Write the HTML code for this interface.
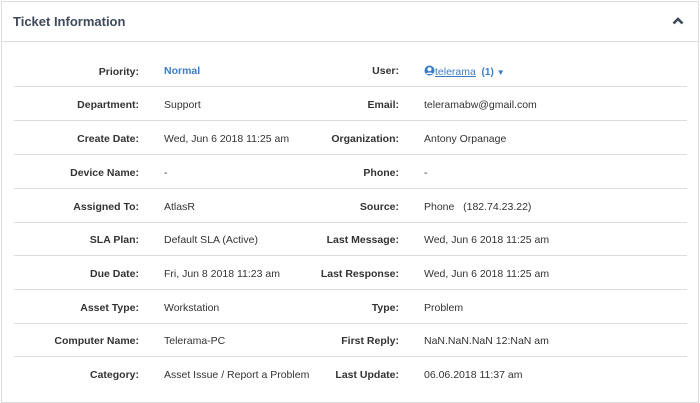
<!DOCTYPE html>
<html><head><style>
body{margin:0;width:700px;height:403px;background:#fff;font-family:"Liberation Sans",Arial,sans-serif;overflow:hidden}
.box{position:absolute;left:1px;top:1px;width:696px;height:400px;border:1px solid #ddd;background:#fff}
.hd{position:absolute;left:0;top:0;width:696px;height:39px;border-bottom:1px solid #ddd}
.hd b{position:absolute;left:11px;top:12px;font-size:13px;color:#3f4a5a}
.chev{position:absolute;right:14px;top:14px}
.row{position:absolute;left:12px;width:673px;height:33px;border-bottom:1px solid #ddd;font-size:10.5px;color:#333}
.row span{position:absolute;top:12px;white-space:nowrap}
.l{font-weight:bold;text-align:right}
.l1{right:548px}.v1{left:150px}.l2{right:288px}.v2{left:410px}
.last{border-bottom:none}
a{color:#3b7dc4}
</style></head><body>
<div class="box">
<div class="hd"><b>Ticket Information</b>
<svg class="chev" width="12" height="9" viewBox="0 0 12 9"><path d="M1.5 7.5L6 3l4.5 4.5" stroke="#3f4a5a" stroke-width="2.6" fill="none"/></svg></div>
<div class="row" style="top:52px;height:32px"><span class="l l1">Priority:</span><span class="v1" style="color:#3b7dc4;font-weight:bold;top:11px">Normal</span><span class="l l2" style="top:11px">User:</span><span class="v2" style="top:11px;color:#3b7dc4"><svg width="11" height="11" viewBox="0 0 11 11" style="vertical-align:-1px"><circle cx="5.5" cy="5.5" r="5" fill="#3b7dc4"/><circle cx="5.5" cy="4.2" r="2" fill="#fff"/><path d="M2 9c1-2 6-2 7 0" fill="#fff"/></svg><u>telerama</u> <b style="font-size:10px">&nbsp;(1)</b> <span style="position:static;font-size:8px">▼</span></span></div>
<div class="row" style="top:85px"><span class="l l1">Department:</span><span class="v1">Support</span><span class="l l2">Email:</span><span class="v2">teleramabw@gmail.com</span></div>
<div class="row" style="top:119px"><span class="l l1">Create Date:</span><span class="v1">Wed, Jun 6 2018 11:25 am</span><span class="l l2">Organization:</span><span class="v2">Antony Orpanage</span></div>
<div class="row" style="top:153px"><span class="l l1">Device Name:</span><span class="v1">-</span><span class="l l2">Phone:</span><span class="v2">-</span></div>
<div class="row" style="top:187px"><span class="l l1">Assigned To:</span><span class="v1">AtlasR</span><span class="l l2">Source:</span><span class="v2">Phone &nbsp;&nbsp;(182.74.23.22)</span></div>
<div class="row" style="top:220px"><span class="l l1">SLA Plan:</span><span class="v1">Default SLA (Active)</span><span class="l l2">Last Message:</span><span class="v2">Wed, Jun 6 2018 11:25 am</span></div>
<div class="row" style="top:254px"><span class="l l1">Due Date:</span><span class="v1">Fri, Jun 8 2018 11:23 am</span><span class="l l2">Last Response:</span><span class="v2">Wed, Jun 6 2018 11:25 am</span></div>
<div class="row" style="top:288px"><span class="l l1">Asset Type:</span><span class="v1">Workstation</span><span class="l l2">Type:</span><span class="v2">Problem</span></div>
<div class="row" style="top:321px"><span class="l l1">Computer Name:</span><span class="v1">Telerama-PC</span><span class="l l2">First Reply:</span><span class="v2">NaN.NaN.NaN 12:NaN am</span></div>
<div class="row last" style="top:355px"><span class="l l1">Category:</span><span class="v1">Asset Issue / Report a Problem</span><span class="l l2">Last Update:</span><span class="v2">06.06.2018 11:37 am</span></div>
</div>
</body></html>
